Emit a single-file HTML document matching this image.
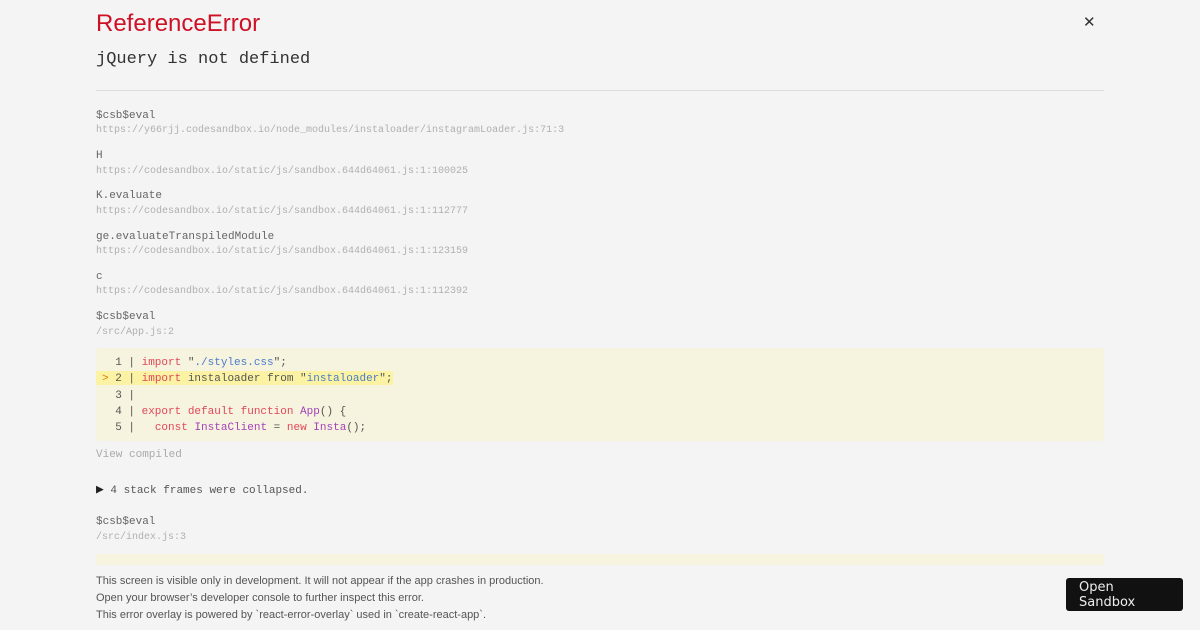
<!DOCTYPE html>
<html><head><meta charset="utf-8"><style>
*{margin:0;padding:0;box-sizing:border-box}
body{width:1200px;height:630px;background:#f4f4f4;position:relative;overflow:hidden;font-family:"Liberation Mono",monospace}
.a{position:absolute;white-space:pre}
.t{left:96px;top:10px;font:24px "Liberation Sans",sans-serif;color:#ce1126}
.m{left:96px;top:50px;font-size:17px;color:#333}
.hr{position:absolute;left:96px;top:90px;width:1008px;height:1px;background:#ddd}
.fn{left:96px;font-size:11px;color:#666}
.u{left:96px;font-size:10px;color:#b0b0b0}
.code{position:absolute;left:96px;top:348px;width:1008px;height:93px;background:#f6f3df;border-radius:3px}
.l{left:102px;font-size:11px;color:#555;line-height:16.3px}
.k{color:#e0475a}.s{color:#4a7cc9}.p{color:#a342b8}
.hl{position:absolute;left:96px;top:371px;width:297px;height:14px;background:#fbf3a3}
.f{left:96px;font:11px "Liberation Sans",sans-serif;color:#555}
.btn{position:absolute;left:1066px;top:578px;width:117px;height:33px;background:#111;border-radius:3px;color:#eee;font:13px "DejaVu Sans",sans-serif;line-height:15px;padding:2px 0 0 13px}
</style></head><body>
<div class="a t">ReferenceError</div>
<div class="a" style="left:1083px;top:13px;font:15px 'DejaVu Sans',sans-serif;color:#333">✕</div>
<div class="a m">jQuery is not defined</div>
<div class="hr"></div>
<div class="a fn" style="top:110px">$csb$eval</div>
<div class="a u" style="top:125px">https://y66rjj.codesandbox.io/node_modules/instaloader/instagramLoader.js:71:3</div>
<div class="a fn" style="top:150px">H</div>
<div class="a u" style="top:166px">https://codesandbox.io/static/js/sandbox.644d64061.js:1:100025</div>
<div class="a fn" style="top:190px">K.evaluate</div>
<div class="a u" style="top:206px">https://codesandbox.io/static/js/sandbox.644d64061.js:1:112777</div>
<div class="a fn" style="top:231px">ge.evaluateTranspiledModule</div>
<div class="a u" style="top:246px">https://codesandbox.io/static/js/sandbox.644d64061.js:1:123159</div>
<div class="a fn" style="top:271px">c</div>
<div class="a u" style="top:286px">https://codesandbox.io/static/js/sandbox.644d64061.js:1:112392</div>
<div class="a fn" style="top:311px">$csb$eval</div>
<div class="a u" style="top:327px">/src/App.js:2</div>
<div class="code"></div>
<div class="hl"></div>
<div class="a l" style="top:355px">  1 | <span class="k">import</span> "<span class="s">./styles.css</span>";
<span style="color:#e07b00">&gt;</span> 2 | <span class="k">import</span> instaloader from "<span class="s">instaloader</span>";
  3 |
  4 | <span class="k">export default function</span> <span class="p">App</span>() {
  5 |   <span class="k">const</span> <span class="p">InstaClient</span> = <span class="k">new</span> <span class="p">Insta</span>();</div>
<div class="a" style="left:96px;top:449px;font-size:11px;color:#aaa">View compiled</div>
<div class="a fn" style="top:482px;color:#555"><span style="font-size:13px;color:#222">▶</span> 4 stack frames were collapsed.</div>
<div class="a fn" style="top:516px">$csb$eval</div>
<div class="a u" style="top:532px">/src/index.js:3</div>
<div style="position:absolute;left:96px;top:554px;width:1008px;height:11px;background:#f6f3df"></div>
<div class="a f" style="top:575px">This screen is visible only in development. It will not appear if the app crashes in production.</div>
<div class="a f" style="top:592px">Open your browser’s developer console to further inspect this error.</div>
<div class="a f" style="top:609px">This error overlay is powered by `react-error-overlay` used in `create-react-app`.</div>
<div class="btn">Open<br>Sandbox</div>
</body></html>
